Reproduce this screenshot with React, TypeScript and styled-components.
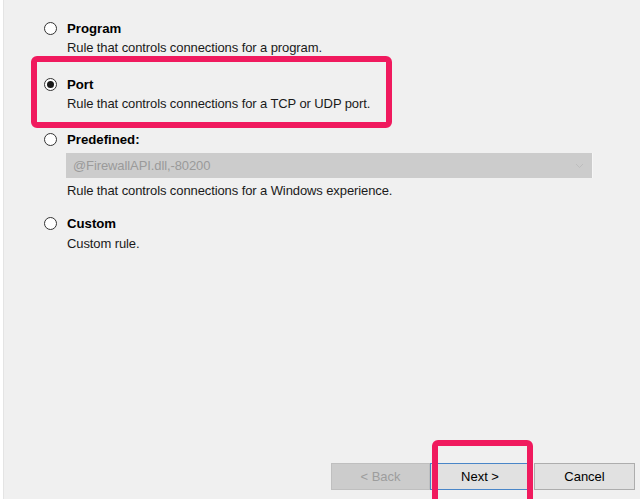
import React from 'react'
import styled, { createGlobalStyle } from 'styled-components'

const GlobalStyle = createGlobalStyle`
  html, body {
    margin: 0;
    padding: 0;
    background: #f0f0f0;
  }
  body {
    font-family: 'Liberation Sans', Arial, sans-serif;
    color: #000;
  }
`

const Page = styled.div`
  position: relative;
  height: 499px;
  box-sizing: border-box;
  border-left: 3px solid #ffffff;
  box-shadow: inset 1px 0 0 #e4e4e4;
  display: flex;
  flex-direction: column;
  overflow: hidden;
`

const Options = styled.div`
  display: flex;
  flex-direction: column;
  padding: 18px 0 0 41px;
`

const Option = styled.div<{ $gap: number }>`
  display: flex;
  flex-direction: column;
  margin-bottom: ${(p) => p.$gap}px;
`

const RadioRow = styled.div`
  display: flex;
  align-items: center;
  height: 20px;
  gap: 10px;
`

const Radio = styled.span<{ $checked?: boolean }>`
  width: 13px;
  height: 13px;
  box-sizing: border-box;
  border-radius: 50%;
  border: 1px solid #333;
  background: #fff;
  display: flex;
  align-items: center;
  justify-content: center;

  &::after {
    content: '';
    display: ${(p) => (p.$checked ? 'block' : 'none')};
    width: 7px;
    height: 7px;
    border-radius: 50%;
    background: #1a1a1a;
  }
`

const Label = styled.span`
  font-size: 13.2px;
  font-weight: bold;
`

const Desc = styled.div<{ $top?: number }>`
  margin-left: 23px;
  margin-top: ${(p) => p.$top ?? 0}px;
  height: 20px;
  line-height: 20px;
  font-size: 13px;
  letter-spacing: -0.1px;
  color: #1a1a1a;
`

const Combo = styled.div`
  margin: 4px 0 0 22px;
  width: 527px;
  height: 25px;
  box-sizing: border-box;
  background: #cccccc;
  border-right: 1px solid #f6f6f6;
  display: flex;
  align-items: center;
  justify-content: space-between;
  padding: 0 8px 0 7px;
  font-size: 13px;
  color: #9a9a9a;
  letter-spacing: -0.1px;
`

const Footer = styled.div`
  margin-top: auto;
  display: flex;
  justify-content: flex-end;
  padding: 0 5px 9px 0;
`

const Button = styled.div<{ $disabled?: boolean; $default?: boolean; $w: number; $gap?: number }>`
  width: ${(p) => p.$w}px;
  height: 27px;
  box-sizing: border-box;
  margin-left: ${(p) => p.$gap ?? 0}px;
  display: flex;
  align-items: center;
  justify-content: center;
  font-size: 13px;
  background: ${(p) => (p.$disabled ? '#cccccc' : '#e1e1e1')};
  color: ${(p) => (p.$disabled ? '#9d9d9d' : '#000')};
  border: 1px solid ${(p) => (p.$disabled ? '#bfbfbf' : p.$default ? '#4a86c8' : '#adadad')};
`

// annotation frames drawn over the dialog
const Highlight = styled.div<{ $x: number; $y: number; $w: number; $h: number }>`
  position: absolute;
  left: ${(p) => p.$x}px;
  top: ${(p) => p.$y}px;
  width: ${(p) => p.$w}px;
  height: ${(p) => p.$h}px;
  box-sizing: border-box;
  border: 6px solid #f01a5e;
  border-radius: 6px;
  pointer-events: none;
`

const Chevron = () => (
  <svg width="9" height="6" viewBox="0 0 9 6">
    <path d="M1 1 L4.5 4.5 L8 1" fill="none" stroke="#bdbdbd" strokeWidth="1" />
  </svg>
)

export default function App() {
  return (
    <>
      <GlobalStyle />
      <Page>
        <Options>
          <Option $gap={16}>
            <RadioRow>
              <Radio />
              <Label>Program</Label>
            </RadioRow>
            <Desc>Rule that controls connections for a program.</Desc>
          </Option>
          <Option $gap={15}>
            <RadioRow>
              <Radio $checked />
              <Label>Port</Label>
            </RadioRow>
            <Desc>Rule that controls connections for a TCP or UDP port.</Desc>
          </Option>
          <Option $gap={12}>
            <RadioRow>
              <Radio />
              <Label>Predefined:</Label>
            </RadioRow>
            <Combo>
              <span>@FirewallAPI.dll,-80200</span>
              <Chevron />
            </Combo>
            <Desc $top={3}>Rule that controls connections for a Windows experience.</Desc>
          </Option>
          <Option $gap={0}>
            <RadioRow>
              <Radio />
              <Label>Custom</Label>
            </RadioRow>
            <Desc $top={1}>Custom rule.</Desc>
          </Option>
        </Options>
        <Footer>
          <Button $disabled $w={99}>&lt; Back</Button>
          <Button $default $w={100}>Next &gt;</Button>
          <Button $w={101} $gap={4}>Cancel</Button>
        </Footer>
        <Highlight $x={28} $y={56} $w={361} $h={72} />
        <Highlight $x={429} $y={440} $w={101} $h={70} />
      </Page>
    </>
  )
}
